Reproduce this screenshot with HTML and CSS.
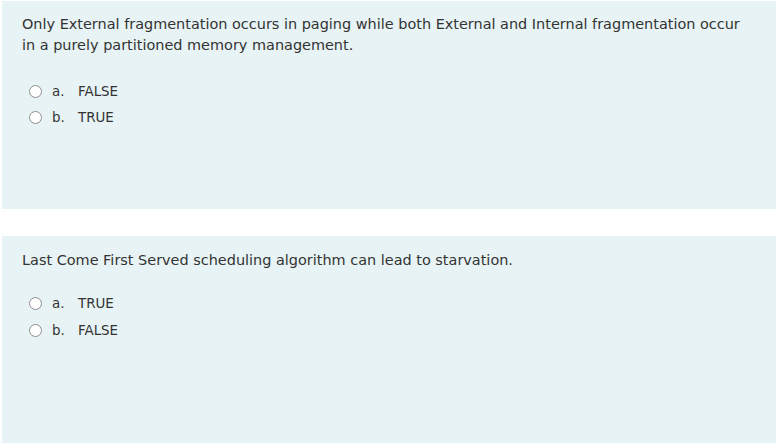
FILE: index.html
```html
<!DOCTYPE html>
<html>
<head>
<meta charset="utf-8">
<link rel="stylesheet" href="styles.css">
</head>
<body>
<div class="quiz">
  <section class="que que-first">
    <div class="qtext">Only External fragmentation occurs in paging while both External and Internal fragmentation occur in a purely partitioned memory management.</div>
    <div class="answers">
      <label class="opt"><span class="radio"></span><span class="letter">a.</span><span class="val">FALSE</span></label>
      <label class="opt"><span class="radio"></span><span class="letter">b.</span><span class="val">TRUE</span></label>
    </div>
  </section>
  <section class="que que-second">
    <div class="qtext">Last Come First Served scheduling algorithm can lead to starvation.</div>
    <div class="answers answers-2">
      <label class="opt"><span class="radio"></span><span class="letter">a.</span><span class="val">TRUE</span></label>
      <label class="opt"><span class="radio"></span><span class="letter">b.</span><span class="val">FALSE</span></label>
    </div>
  </section>
</div>
</body>
</html>
```
FILE: styles.css
```css
html, body {
  margin: 0;
  padding: 0;
  background: #ffffff;
}
body {
  font-family: "DejaVu Sans", sans-serif;
  color: #333333;
}
.quiz {
  display: flex;
  flex-direction: column;
  gap: 27px;
  padding: 1px 2px 0 2px;
}
.que {
  background: #e7f3f5;
  padding: 13px 20px 0 20px;
  box-sizing: border-box;
}
.que-first {
  height: 208px;
}
.que-second {
  height: 207px;
  padding-top: 14px;
}
.qtext {
  font-size: 14.45px;
  line-height: 21px;
  max-width: 726px;
}
.answers {
  margin-top: 25px;
  padding-left: 7px;
  display: flex;
  flex-direction: column;
  gap: 5px;
}
.answers-2 {
  margin-top: 22px;
  gap: 6px;
}
.opt {
  display: flex;
  align-items: center;
  height: 21px;
  font-size: 13.4px;
}
.radio {
  width: 11px;
  height: 11px;
  border: 1px solid #8f8f8f;
  border-radius: 50%;
  background: #ffffff;
  box-sizing: content-box;
}
.letter {
  margin-left: 10px;
  width: 26px;
}
```
